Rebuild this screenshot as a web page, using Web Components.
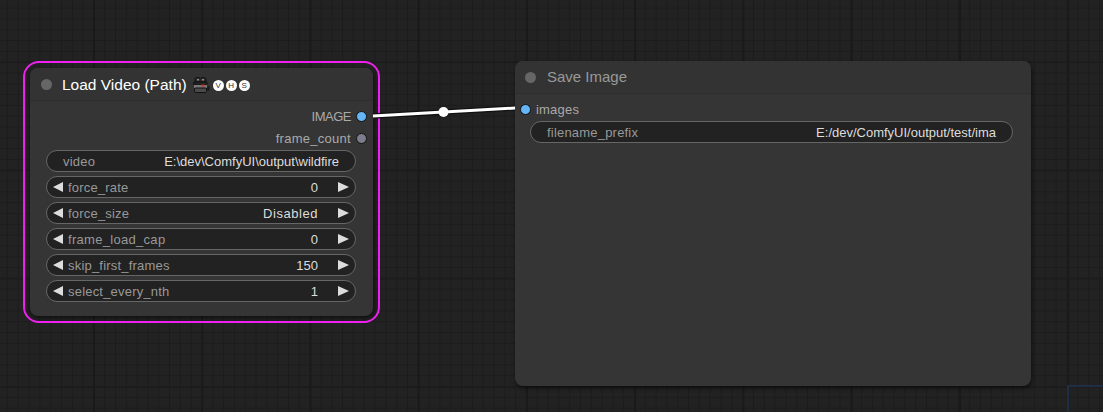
<!DOCTYPE html>
<html>
<head>
<meta charset="utf-8">
<style>
  html, body { margin: 0; height: 100%; background: #222; overflow: hidden; }
</style>
</head>
<body>
<graph-canvas>
  <graph-node style="left:30px;top:68px;width:343px;height:248px" selected>
    <span slot="title">Load Video (Path)<vhs-badge></vhs-badge></span>
    <node-socket dir="out" color="#64b5f6" style="letter-spacing:-.5px">IMAGE</node-socket>
    <node-socket dir="out" color="#7c7c8c" style="margin-bottom:1px;letter-spacing:.28px">frame_count</node-socket>
    <node-widget kind="text" label="video" value="E:\dev\ComfyUI\output\wildfire"></node-widget>
    <node-widget label="force_rate" value="0"></node-widget>
    <node-widget label="force_size" value="Disabled" style="--value-spacing:.55px"></node-widget>
    <node-widget label="frame_load_cap" value="0" style="--label-spacing:.3px"></node-widget>
    <node-widget label="skip_first_frames" value="150"></node-widget>
    <node-widget label="select_every_nth" value="1"></node-widget>
  </graph-node>
  <graph-node style="left:515px;top:61px;width:516px;height:325px;--pad-l:15px;--pad-r:18px">
    <span slot="title">Save Image</span>
    <node-socket dir="in" color="#64b5f6">images</node-socket>
    <node-widget kind="text" label="filename_prefix" value="E:/dev/ComfyUI/output/test/ima"></node-widget>
  </graph-node>
</graph-canvas>

<script>
// canvas with the grid, the link and the group box sits behind the nodes
class GraphCanvas extends HTMLElement {
  constructor() {
    super();
    this.attachShadow({ mode: "open" });
    this.shadowRoot.innerHTML = `
      <style>
        :host { display: block; position: relative; width: 1103px; height: 412px; overflow: hidden; background-color: #222; }
        .grid { position: absolute; inset: 0;
          background-image:
            linear-gradient(to right, #1a1a1a 2px, transparent 2px),
            linear-gradient(to bottom, #1c1c1c 1.500px, transparent 1.500px),
            linear-gradient(to right, #1c1c1c 1px, transparent 1px),
            linear-gradient(to bottom, #1c1c1c 1px, transparent 1px);
          background-size: 108.250px 108.250px, 108.250px 108.250px, 10.825px 10.825px, 10.825px 10.825px;
          background-position: 93px 0, 0 61.250px, 6.900px 0, 0 7.600px; }
        .group { position: absolute; left: 1067px; top: 385px; width: 60px; height: 60px; border: 2px solid #1f2d45; }
        svg { position: absolute; left: 0; top: 0; z-index: 5; pointer-events: none; }
      </style>
      <div class="grid"></div>
      <div class="group"></div>
      <slot></slot>
      <svg width="1103" height="412" viewBox="0 0 1103 412">
        <path d="M373 116 L515 108" stroke="#111" stroke-width="5.500" fill="none"/>
        <path d="M373 116 L515 108" stroke="#fff" stroke-width="3" fill="none"/>
        <circle cx="443.500" cy="112" r="5" fill="#fff"/>
      </svg>`;
  }
}

class GraphNode extends HTMLElement {
  constructor() {
    super();
    this.attachShadow({ mode: "open" });
    this.shadowRoot.innerHTML = `
      <style>
        :host { display: flex; flex-direction: column; position: absolute; box-sizing: border-box;
          background: #353535; border-radius: 8px; box-shadow: 1px 2px 4px rgba(0,0,0,.55);
          font-family: "Liberation Sans", Arial, sans-serif; color: #999; }
        :host([selected]) .outline { display: block; }
        .outline { display: none; position: absolute; inset: -7px; border: 2px solid #ef1fef; border-radius: 16px; pointer-events: none; }
        header { display: flex; align-items: center; gap: 11px; height: 32px; padding-left: 10px; flex: none;
          background: #333; border-radius: 8px 8px 0 0; border-bottom: 1px solid #2e2e2e; font-size: 15px; color: #999; }
        header ::slotted(span) { padding-bottom: 2px; }
        :host([selected]) header { font-size: 15.500px; color: #fff; gap: 10px; padding-left: 11px; }
        :host([selected]) header ::slotted(span) { padding: 2px 0 0; }
        .dot { width: 11px; height: 11px; border-radius: 50%; background: #666; flex: none; }
        .body { display: flex; flex-direction: column; padding: 4px var(--pad-r, 17px) 0 var(--pad-l, 16px); }
      </style>
      <div class="outline"></div>
      <header><span class="dot"></span><slot name="title"></slot></header>
      <div class="body"><slot></slot></div>`;
  }
}

class NodeSocket extends HTMLElement {
  constructor() {
    super();
    this.attachShadow({ mode: "open" });
    this.shadowRoot.innerHTML = `
      <style>
        :host { display: flex; align-items: center; height: 22px; gap: 5px; font-size: 13px; color: #aaa; }
        :host([dir="out"]) { justify-content: flex-end; margin-right: -11px; }
        :host([dir="in"]) { margin-left: -10px; margin-bottom: 1px; letter-spacing: .2px; }
        i { width: 9px; height: 9px; border-radius: 50%; border: 1px solid #111; flex: none; background: var(--c); }
      </style>
      <i></i><span><slot></slot></span>`;
    const dot = this.shadowRoot.querySelector("i");
    dot.style.setProperty("--c", this.getAttribute("color"));
    if (this.getAttribute("dir") === "out") {
      this.shadowRoot.appendChild(dot);
    }
  }
}

class NodeWidget extends HTMLElement {
  constructor() {
    super();
    this.attachShadow({ mode: "open" });
    const isText = this.getAttribute("kind") === "text";
    this.shadowRoot.innerHTML = `
      <style>
        :host { display: flex; align-items: center; box-sizing: border-box; height: 22px; margin-bottom: 4px; flex: none;
          background: #222; border: 1px solid #666; border-radius: 11px; font-size: 13px; color: #999; }
        .arrow { flex: none; width: 0; height: 0; border-top: 5.500px solid transparent; border-bottom: 5.500px solid transparent; }
        .left { border-right: 10px solid #ddd; margin: 0 5px 0 6px; }
        .right { border-left: 11px solid #ddd; margin: 0 6px 0 20px; }
        .label { flex: 1; white-space: nowrap; letter-spacing: var(--label-spacing, .2px); }
        .value { color: #ddd; white-space: nowrap; letter-spacing: var(--value-spacing, 0); }
        :host([kind="text"]) .label { padding-left: 16px; }
        :host([kind="text"]) .value { padding-right: 16px; }
      </style>
      ${isText ? "" : '<span class="arrow left"></span>'}
      <span class="label"></span><span class="value"></span>
      ${isText ? "" : '<span class="arrow right"></span>'}`;
    this.shadowRoot.querySelector(".label").innerText = this.getAttribute("label");
    this.shadowRoot.querySelector(".value").innerText = this.getAttribute("value");
  }
}

// camera emoji plus the three round letters after the node title
class VhsBadge extends HTMLElement {
  constructor() {
    super();
    this.attachShadow({ mode: "open" });
    this.shadowRoot.innerHTML = `
      <style>
        :host { display: inline-flex; align-items: center; vertical-align: -4px; gap: 2px; margin-left: 5px; }
        svg { margin-right: 1px; }
        b { display: flex; align-items: center; justify-content: center; width: 11px; height: 11px; border-radius: 50%;
          background: #fff; color: #333; font: 400 8px "Liberation Sans", Arial, sans-serif; }
      </style>
      <svg width="18" height="18" viewBox="0 0 18 18">
        <path d="M3 6V3.500C3 2 4 1.500 5 1.500h1.500C7.500 1.500 8 2 8.500 2.500 9 2 9.500 1.500 10.500 1.500H12c1 0 2 .5 2 2V6z" fill="#2b2b2b" stroke="#111"/>
        <rect x="5" y="3" width="2" height="1.500" fill="#888"/>
        <rect x="10" y="3" width="2" height="1.500" fill="#888"/>
        <rect x="1.500" y="6" width="13.500" height="3" rx="1" fill="#222" stroke="#111"/>
        <rect x="2" y="9" width="13" height="3" fill="#777"/>
        <rect x="2.500" y="12" width="12" height="4.500" rx="1" fill="#4a4a4a" stroke="#111"/>
        <path d="M15 11l2.500-1v5L15 14z" fill="#1a1a1a"/>
        <rect x="9.500" y="8.500" width="3" height="2" fill="#c9342c"/>
      </svg>
      <b>V</b><b>H</b><b>S</b>`;
  }
}

customElements.define("graph-canvas", GraphCanvas);
customElements.define("graph-node", GraphNode);
customElements.define("node-socket", NodeSocket);
customElements.define("node-widget", NodeWidget);
customElements.define("vhs-badge", VhsBadge);
</script>
</body>
</html>
